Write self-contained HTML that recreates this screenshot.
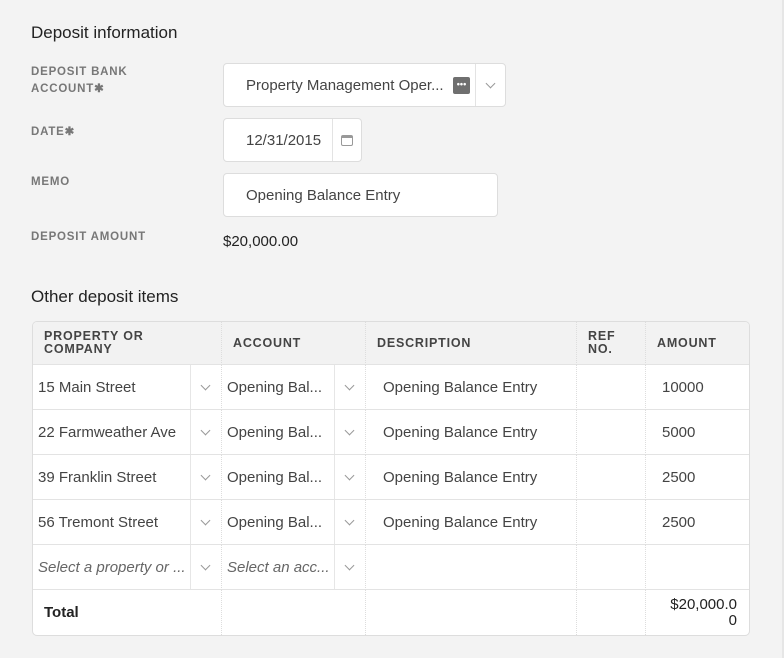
<!DOCTYPE html>
<html><head><style>
*{box-sizing:border-box;margin:0;padding:0}
body{width:784px;height:658px;background:#f3f3f3;font-family:"Liberation Sans",sans-serif;color:#333;position:relative;overflow:hidden}
.a{position:absolute}
h2{position:absolute;font-weight:normal;font-size:17px;color:#222}
.lbl{position:absolute;font-size:11.5px;font-weight:bold;color:#777;letter-spacing:0.8px;line-height:17px}
.box{position:absolute;background:#fff;border:1px solid #ddd;border-radius:4px;font-size:15px;color:#444}
.chev{position:absolute;width:7px;height:7px;border-right:1px solid #999;border-bottom:1px solid #999;transform:rotate(45deg)}
table{position:absolute;left:32px;top:321px;width:718px;border-collapse:separate;border-spacing:0;border:1px solid #ddd;border-radius:5px;background:#fff;overflow:hidden}
td,th{height:45px;border-right:1px dotted #ddd;border-bottom:1px solid #e3e3e3;font-size:15px;color:#444;text-align:left;font-weight:normal;position:relative}
th{background:#f2f2f2;font-size:12.5px;font-weight:bold;color:#444;letter-spacing:0.8px;line-height:13px;height:43px;padding:0 11px}
tr:last-child td{border-bottom:none}
td:last-child,th:last-child{border-right:none}
.sel{padding-left:5px}
.sel .d{position:absolute;right:0;top:0;bottom:0;width:31px;border-left:1px solid #e6e6e6}
.sel .d .chev{left:11px;top:17px}
.it{font-style:italic;color:#666}
</style></head><body>
<div class="a" style="right:0;top:0;width:2px;height:658px;background:#e6e6e6"></div>
<h2 style="left:31px;top:23px">Deposit information</h2>
<div class="lbl" style="left:31px;top:64px">DEPOSIT BANK<br>ACCOUNT✱</div>
<div class="box" style="left:223px;top:63px;width:283px;height:44px">
<div class="a" style="left:22px;top:13px">Property Management Oper...</div>
<div class="a" style="left:229px;top:13px;width:17px;height:17px;background:#6f6f6f;border-radius:2px;color:#fff;font-size:9px;line-height:14px;text-align:center;font-weight:bold">•••</div>
<div class="a" style="left:251px;top:0;bottom:0;width:1px;background:#e3e3e3"></div>
<div class="chev" style="left:263px;top:16px"></div></div>
<div class="lbl" style="left:31px;top:124px">DATE✱</div>
<div class="box" style="left:223px;top:118px;width:139px;height:44px">
<div class="a" style="left:22px;top:13px">12/31/2015</div>
<div class="a" style="left:108px;top:0;bottom:0;width:1px;background:#e3e3e3"></div>
<div class="a" style="left:117px;top:16px;width:12px;height:11px;border:1px solid #999;border-radius:2px;border-top-width:3px"></div></div>
<div class="lbl" style="left:31px;top:174px">MEMO</div>
<div class="box" style="left:223px;top:173px;width:275px;height:44px">
<div class="a" style="left:22px;top:13px">Opening Balance Entry</div></div>
<div class="lbl" style="left:31px;top:229px">DEPOSIT AMOUNT</div>
<div class="a" style="left:223px;top:233px;font-size:15px;color:#222">$20,000.00</div>
<h2 style="left:31px;top:287px">Other deposit items</h2>
<table>
<tr><th style="width:189px">PROPERTY OR<br>COMPANY</th><th style="width:144px">ACCOUNT</th><th style="width:211px">DESCRIPTION</th><th style="width:69px">REF<br>NO.</th><th>AMOUNT</th></tr>
<tr><td class="sel">15 Main Street<div class="d"><div class="chev"></div></div></td><td class="sel">Opening Bal...<div class="d"><div class="chev"></div></div></td><td style="padding-left:17px">Opening Balance Entry</td><td></td><td style="padding-left:16px">10000</td></tr>
<tr><td class="sel">22 Farmweather Ave<div class="d"><div class="chev"></div></div></td><td class="sel">Opening Bal...<div class="d"><div class="chev"></div></div></td><td style="padding-left:17px">Opening Balance Entry</td><td></td><td style="padding-left:16px">5000</td></tr>
<tr><td class="sel">39 Franklin Street<div class="d"><div class="chev"></div></div></td><td class="sel">Opening Bal...<div class="d"><div class="chev"></div></div></td><td style="padding-left:17px">Opening Balance Entry</td><td></td><td style="padding-left:16px">2500</td></tr>
<tr><td class="sel">56 Tremont Street<div class="d"><div class="chev"></div></div></td><td class="sel">Opening Bal...<div class="d"><div class="chev"></div></div></td><td style="padding-left:17px">Opening Balance Entry</td><td></td><td style="padding-left:16px">2500</td></tr>
<tr><td class="sel it">Select a property or ...<div class="d"><div class="chev"></div></div></td><td class="sel it">Select an acc...<div class="d"><div class="chev"></div></div></td><td></td><td></td><td></td></tr>
<tr><td style="padding-left:11px;font-weight:bold;color:#222">Total</td><td></td><td></td><td></td><td style="text-align:right;padding-right:12px;line-height:16px;color:#222">$20,000.0<br>0</td></tr>
</table>
</body></html>
